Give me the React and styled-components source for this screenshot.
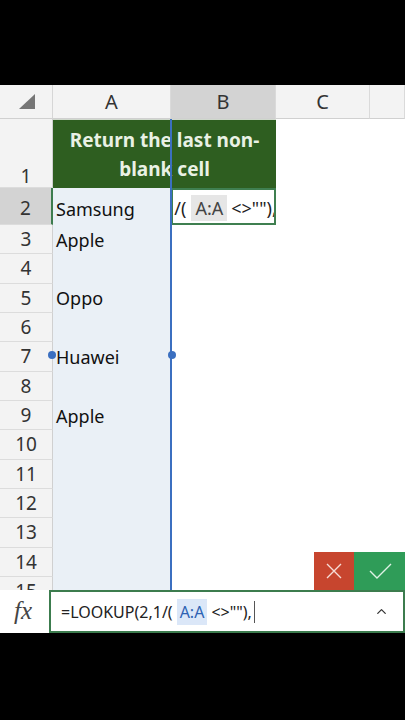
import React from 'react';
import styled, { createGlobalStyle } from 'styled-components';
import { ChevronUp } from 'lucide-react';

const Global = createGlobalStyle`
  html, body {
    margin: 0;
    padding: 0;
    background: #000;
  }
  #root {
    height: 720px;
  }
`;

const Screen = styled.div`
  width: 405px;
  height: 720px;
  display: flex;
  flex-direction: column;
  background: #000;
  font-family: "Noto Sans", "Open Sans", sans-serif;
  overflow: hidden;
`;

const Black = styled.div`
  height: ${({ h }) => h}px;
  flex: ${({ grow }) => (grow ? 1 : 'none')};
  background: #000;
`;

const Sheet = styled.div`
  position: relative;
  height: 505px;
  overflow: hidden;
  background: #fff;
  display: grid;
  grid-template-columns: 53px 118px 105px 94px 1fr;
  grid-template-rows: 34px 69px 37px repeat(13, 29.33px);
`;

const Corner = styled.div`
  background: #f3f3f3;
  border-right: 1px solid #d6d6d6;
  border-bottom: 1px solid #d0d0d0;
  display: flex;
  align-items: flex-end;
  justify-content: flex-end;
  padding: 0 17px 9px 0;
`;

const ColHead = styled.div`
  background: ${({ selected }) => (selected ? '#d3d3d3' : '#f3f3f3')};
  border-right: 1px solid #dadada;
  border-bottom: 1px solid #d0d0d0;
  display: flex;
  align-items: center;
  justify-content: center;
  font-size: 20px;
  color: #333;
`;

const RowHead = styled.div`
  background: ${({ selected }) => (selected ? '#d3d3d3' : '#f3f3f3')};
  border-bottom: 1px solid #dcdcdc;
  border-right: ${({ selected }) => (selected ? '2px solid #3d7c4e' : '1px solid #d0d0d0')};
  display: flex;
  align-items: ${({ tall }) => (tall ? 'flex-end' : 'center')};
  justify-content: center;
  padding-top: ${({ selected }) => (selected ? '4px' : '0')};
  font-size: 19px;
  line-height: 22px;
  color: #333;
  box-sizing: border-box;
`;

const Cell = styled.div`
  background: ${({ inSel }) => (inSel ? '#eaf0f6' : '#fff')};
  display: flex;
  align-items: center;
  padding: ${({ first }) => (first ? '4px 0 0 3px' : '0 0 0 3px')};
  font-size: 18px;
  line-height: 22px;
  color: #111;
  white-space: nowrap;
  box-sizing: border-box;
`;

const TitleCell = styled.div`
  grid-column: 2 / 4;
  background: #2e5e20;
  border-top: 1px solid #cfd8cc;
  color: #e9f1e4;
  font-weight: 700;
  font-size: 19px;
  line-height: 29px;
  text-align: center;
  display: flex;
  flex-direction: column;
  justify-content: center;
  padding-top: 2px;
  box-sizing: border-box;
`;

const ActiveCell = styled.div`
  border: 2px solid #3f7f50;
  background: #fff;
  display: flex;
  align-items: center;
  overflow: hidden;
  white-space: nowrap;
  font-size: 18px;
  line-height: 22px;
  color: #222;
  box-sizing: border-box;
  padding-top: 2px;
`;

const Clipped = styled.span`
  margin-left: -9px;
`;

const Chip = styled.span`
  background: ${({ blue }) => (blue ? '#dbe7f8' : '#e6e6e6')};
  color: ${({ blue }) => (blue ? '#2d62b3' : '#444')};
  padding: 2px ${({ blue }) => (blue ? 3 : 4)}px;
  margin: 0 4px 0 ${({ blue }) => (blue ? 4 : 5)}px;
`;

const SelEdge = styled.div`
  position: absolute;
  left: 170px;
  top: 34px;
  bottom: 0;
  width: 2px;
  background: #3b6fc0;
`;

const Handle = styled.div`
  position: absolute;
  top: 266px;
  left: ${({ x }) => x - 4}px;
  width: 8px;
  height: 8px;
  border-radius: 50%;
  background: #3b6fc0;
`;

const Confirm = styled.div`
  position: absolute;
  right: 0;
  bottom: 0;
  display: flex;
  height: 38px;
`;

const ConfirmBtn = styled.div`
  width: ${({ w }) => w}px;
  background: ${({ bg }) => bg};
  display: flex;
  align-items: center;
  justify-content: center;
`;

const FormulaBar = styled.div`
  height: 43px;
  background: #fff;
  display: flex;
`;

const Fx = styled.div`
  width: 49px;
  display: flex;
  align-items: center;
  justify-content: center;
  font-family: "Liberation Serif", "DejaVu Serif", serif;
  font-style: italic;
  font-size: 25px;
  line-height: 30px;
  color: #444;
  padding: 0 3px 2px 0;
  box-sizing: border-box;
`;

const Input = styled.div`
  flex: 1;
  border: 2px solid #3c7c4e;
  display: flex;
  align-items: center;
  padding: 0 14px 0 10px;
  font-size: 16px;
  color: #222;
  white-space: nowrap;
`;

const Caret = styled.span`
  display: inline-block;
  width: 1px;
  height: 22px;
  background: #555;
  margin-left: 2px;
`;

const Grow = styled.div`
  flex: 1;
`;

const rows = [
  [2, 'Samsung'],
  [3, 'Apple'],
  [4, ''],
  [5, 'Oppo'],
  [6, ''],
  [7, 'Huawei'],
  [8, ''],
  [9, 'Apple'],
  [10, ''],
  [11, ''],
  [12, ''],
  [13, ''],
  [14, ''],
  [15, ''],
];

export default function App() {
  return (
    <Screen>
      <Global />
      <Black h={85} />
      <Sheet>
        <Corner>
          <svg width="16" height="15" viewBox="0 0 16 15">
            <polygon points="16,0 16,15 0,15" fill="#767676" />
          </svg>
        </Corner>
        <ColHead>A</ColHead>
        <ColHead selected>B</ColHead>
        <ColHead>C</ColHead>
        <ColHead />

        <RowHead tall>1</RowHead>
        <TitleCell>
          <span>Return the last non-</span>
          <span>blank cell</span>
        </TitleCell>
        <Cell />
        <Cell />

        {rows.map(([n, text]) => (
          <React.Fragment key={n}>
            <RowHead selected={n === 2}>{n}</RowHead>
            <Cell inSel first={n === 2}>{text}</Cell>
            {n === 2 ? (
              <ActiveCell>
                <Clipped>1/(</Clipped>
                <Chip>A:A</Chip>&lt;&gt;""),
              </ActiveCell>
            ) : (
              <Cell />
            )}
            <Cell />
            <Cell />
          </React.Fragment>
        ))}

        <SelEdge />
        <Handle x={52} />
        <Handle x={172} />

        <Confirm>
          <ConfirmBtn w={40} bg="#c7452e">
            <svg width="18" height="18" viewBox="0 0 18 18">
              <path d="M2 2 L16 16 M16 2 L2 16" stroke="#f6dcd6" strokeWidth="1.4" fill="none" />
            </svg>
          </ConfirmBtn>
          <ConfirmBtn w={51} bg="#2f9c58">
            <svg width="24" height="18" viewBox="0 0 24 18">
              <path d="M2 9 L9 16 L23 2" stroke="#dff2e5" strokeWidth="1.4" fill="none" />
            </svg>
          </ConfirmBtn>
        </Confirm>
      </Sheet>

      <FormulaBar>
        <Fx>fx</Fx>
        <Input>
          =LOOKUP(2,1/(<Chip blue>A:A</Chip>&lt;&gt;""),
          <Caret />
          <Grow />
          <ChevronUp size={15} color="#333" strokeWidth={2} />
        </Input>
      </FormulaBar>
      <Black grow />
    </Screen>
  );
}
